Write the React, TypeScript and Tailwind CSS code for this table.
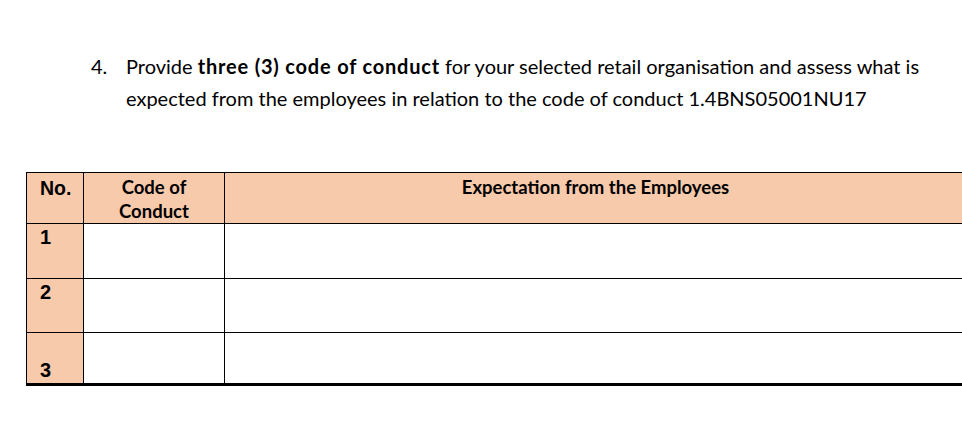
export default function App() {
  const calibri = { fontFamily: 'Lato, "Open Sans", sans-serif' }
  const arial = { fontFamily: '"Liberation Sans", Arial, sans-serif' }

  return (
    <div className="w-[962px] h-[438px] overflow-hidden bg-white text-black">
      {/* Question */}
      <div className="flex pl-[91px] pt-[50px] text-[20px] leading-[32px]" style={calibri}>
        <div className="w-[35px]">4.</div>
        <div>
          <div>
            Provide <span className="font-bold tracking-[0.8px]">three (3) code of conduct</span> for your selected retail organisation and assess what is
          </div>
          <div>expected from the employees in relation to the code of conduct 1.4BNS05001NU17</div>
        </div>
      </div>

      {/* Table */}
      <div className="pl-[26px] pt-[58px]">
        <table className="w-[940px] border-collapse table-fixed">
          <colgroup>
            <col className="w-[57px]" />
            <col className="w-[141px]" />
            <col className="w-[742px]" />
          </colgroup>
          <thead>
            <tr className="h-[50px] bg-[#f7caac]">
              <th className="border border-black align-top text-left pl-[13px] pt-0 text-[19.5px] leading-[30px] font-bold" style={arial}>
                No.
              </th>
              <th className="border border-black align-top text-center pt-[2px] text-[18.5px] leading-[24px] font-bold" style={calibri}>
                Code of
                <br />
                Conduct
              </th>
              <th className="border border-black align-top text-center pt-[2px] text-[18.5px] leading-[24px] font-bold" style={calibri}>
                Expectation from the Employees
              </th>
            </tr>
          </thead>
          <tbody>
            <tr className="h-[55px]">
              <td className="border border-black bg-[#f7caac] align-top pl-[13px] pt-0 text-[20px] leading-[26px] font-bold" style={arial}>
                1
              </td>
              <td className="border border-black" />
              <td className="border border-black" />
            </tr>
            <tr className="h-[54px]">
              <td className="border border-black bg-[#f7caac] align-top pl-[13px] pt-0 text-[20px] leading-[26px] font-bold" style={arial}>
                2
              </td>
              <td className="border border-black" />
              <td className="border border-black" />
            </tr>
            <tr className="h-[52px]">
              <td className="border border-black border-b-[3px] bg-[#f7caac] align-bottom pl-[13px] pb-0 text-[20px] leading-[26px] font-bold" style={arial}>
                3
              </td>
              <td className="border border-black border-b-[3px]" />
              <td className="border border-black border-b-[3px]" />
            </tr>
          </tbody>
        </table>
      </div>
    </div>
  )
}
